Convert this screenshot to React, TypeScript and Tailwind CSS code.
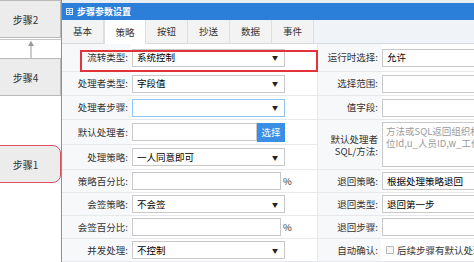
import React from "react";

const font = { fontFamily: '"Noto Sans CJK SC", "Noto Sans", sans-serif' };

function Label({ children, className = "" }: { children: React.ReactNode; className?: string }) {
  return (
    <div className={"flex items-center justify-end pr-[3px] bg-[#f7f8fa] border-b border-[#e6e8eb] text-[#333] " + className}>
      {children}
    </div>
  );
}

function Cell({ children, className = "" }: { children?: React.ReactNode; className?: string }) {
  return <div className={"flex items-center border-b border-[#e6e8eb] bg-white " + className}>{children}</div>;
}

function Select({ value, focus = false }: { value?: string; focus?: boolean }) {
  return (
    <div
      className={
        "flex items-center justify-between w-[153px] h-[18px] ml-[1px] pl-[4px] pr-[6px] bg-white border " +
        (focus ? "border-[#8cc3f0]" : "border-[#c8c8c8]")
      }
    >
      <span>{value}</span>
      <span className="text-[6px] text-[#222]">▼</span>
    </div>
  );
}

function Input({ value, w = "w-[153px]" }: { value?: string; w?: string }) {
  return (
    <div className={"flex items-center h-[18px] ml-[1px] pl-[4px] bg-white border border-[#c8c8c8] " + w}>
      {value}
    </div>
  );
}

function Step({ name, red = false }: { name: string; red?: boolean }) {
  return (
    <div
      className={
        "flex items-center justify-center h-[38px] -ml-[10px] bg-[#ececec] text-[#333] text-[10px] border " +
        (red ? "border-[#e0505a] rounded-[8px]" : "border-[#b9b9b9]")
      }
    >
      {name}
    </div>
  );
}

export default function App() {
  const rows = "grid-rows-[28px_24px_24px_25px_25px_23px_23px_23px_23px]";
  return (
    <div className="flex w-[474px] h-[262px] overflow-hidden bg-white text-[9.5px]" style={font}>
      {/* canvas */}
      <div className="w-[61px] shrink-0 flex flex-col">
        <Step name="步骤2" />
        <div className="h-[1px] mt-[1px] bg-[#c8c8c8]" />
        <div className="relative h-[18px]">
          <svg className="absolute left-[27px] top-0" width="8" height="18" viewBox="0 0 8 18">
            <path d="M4 2 V18" stroke="#9a9a9a" strokeWidth="1" />
            <path d="M1 6 L4 1 L7 6 Z" fill="#9a9a9a" />
          </svg>
        </div>
        <Step name="步骤4" />
        <div className="h-[49px]" />
        <Step name="步骤1" red />
      </div>

      {/* dialog */}
      <div className="relative flex-1 flex flex-col border-l border-[#5b9be0]">
        <div className="h-[3px] bg-[#e9eef4]" />
        <div className="flex items-center h-[19px] pl-[4px] bg-[#2b7fd9] text-white font-bold text-[9px]">
          <svg width="7" height="7" viewBox="0 0 7 7" className="mr-[4px]">
            <rect x="0.5" y="0.5" width="6" height="6" fill="none" stroke="#dce9f8" />
            <path d="M0.5 2.5 H6.5 M0.5 4.5 H6.5 M3.5 0.5 V6.5" stroke="#dce9f8" strokeWidth="0.8" />
          </svg>
          步骤参数设置
        </div>
        <div className="flex h-[24px] bg-[#f0f3f7] border-b border-[#d6d9dd]">
          {["基本", "策略", "按钮", "抄送", "数据", "事件"].map((t) => (
            <div
              key={t}
              className={
                "flex items-center justify-center w-[42px] border-r border-[#dcdfe3] text-[#333] " +
                (t === "策略" ? "bg-white border-l -mb-[1px] h-[25px]" : "bg-[#f3f3f3]")
              }
            >
              {t}
            </div>
          ))}
        </div>

        <div className="flex">
          <div className={"grid grid-cols-[69px_186px] " + rows}>
            <Label>流转类型:</Label>
            <Cell>
              <Select value="系统控制" />
            </Cell>
            <Label>处理者类型:</Label>
            <Cell>
              <Select value="字段值" />
            </Cell>
            <Label>处理者步骤:</Label>
            <Cell>
              <Select focus />
            </Cell>
            <Label>默认处理者:</Label>
            <Cell>
              <Input w="w-[125px]" />
              <div className="flex items-center justify-center w-[28px] h-[19px] bg-[#3a8ee6] text-white">选择</div>
            </Cell>
            <Label>处理策略:</Label>
            <Cell>
              <Select value="一人同意即可" />
            </Cell>
            <Label>策略百分比:</Label>
            <Cell>
              <Input w="w-[149px]" />
              <span className="ml-[2px] text-[#333]">%</span>
            </Cell>
            <Label>会签策略:</Label>
            <Cell>
              <Select value="不会签" />
            </Cell>
            <Label>会签百分比:</Label>
            <Cell>
              <Input w="w-[149px]" />
              <span className="ml-[2px] text-[#333]">%</span>
            </Cell>
            <Label>并发处理:</Label>
            <Cell>
              <Select value="不控制" />
            </Cell>
          </div>

          <div className={"grid grid-cols-[63px_120px] border-l border-[#e6e8eb] " + rows}>
            <Label>运行时选择:</Label>
            <Cell>
              <Input value="允许" w="w-[120px]" />
            </Cell>
            <Label>选择范围:</Label>
            <Cell>
              <Input w="w-[120px]" />
            </Cell>
            <Label>值字段:</Label>
            <Cell>
              <Input w="w-[120px]" />
            </Cell>
            <Label className="row-span-2 flex-col !items-end !justify-center leading-[12px]">
              <span>默认处理者</span>
              <span>SQL/方法:</span>
            </Label>
            <Cell className="row-span-2">
              <div className="w-[120px] h-[45px] ml-[1px] pl-[3px] pt-[2px] border border-[#c8c8c8] text-[#9a9a9a] leading-[12px] whitespace-nowrap overflow-hidden">
                <div>方法或SQL返回组织机构</div>
                <div>位Id,u_人员ID,w_工作组</div>
              </div>
            </Cell>
            <Label>退回策略:</Label>
            <Cell>
              <Input value="根据处理策略退回" w="w-[120px]" />
            </Cell>
            <Label>退回类型:</Label>
            <Cell>
              <Input value="退回第一步" w="w-[120px]" />
            </Cell>
            <Label>退回步骤:</Label>
            <Cell>
              <Input w="w-[120px]" />
            </Cell>
            <Label>自动确认:</Label>
            <Cell>
              <span className="ml-[5px] mr-[3px] w-[8px] h-[8px] border border-[#b5b5b5] bg-[#f6f6f6] rounded-[1px]" />
              <span className="whitespace-nowrap text-[#333]">后续步骤有默认处理</span>
            </Cell>
          </div>
        </div>

        {/* highlight annotation */}
        <div className="absolute left-[18px] top-[50px] w-[238px] h-[22px] border-2 border-[#e2333a] pointer-events-none" />
      </div>
    </div>
  );
}
